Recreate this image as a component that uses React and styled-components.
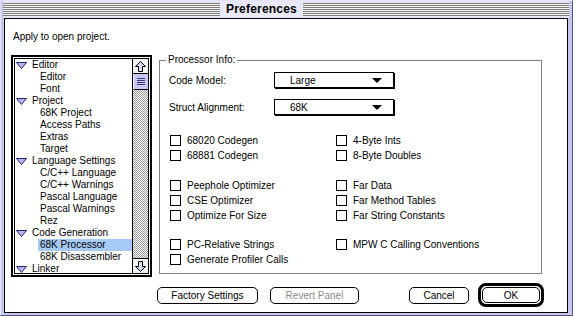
import React from 'react'
import styled, { createGlobalStyle } from 'styled-components'

const GlobalStyle = createGlobalStyle`
  html, body { margin: 0; padding: 0; background: #fff; }
  body {
    font-family: "Liberation Sans", Arial, sans-serif;
    font-size: 10px;
    color: #000;
  }
  * { box-sizing: border-box; }
`

const Window = styled.div`
  width: 573px;
  height: 316px;
  display: flex;
  flex-direction: column;
  background: #c6c6ee;
  border: 1px solid #55557a;
  border-top-color: #e4e4ff;
  border-left-color: #e4e4ff;
  padding: 0 4px 2px 3px;
`

const TitleBar = styled.div`
  height: 17px;
  display: flex;
  align-items: center;
  margin: 0 -1px;
  background: #e8e8f6;
`

const Stripes = styled.div`
  flex: ${p => (p.$w ? `0 0 ${p.$w}px` : '1')};
  height: 13px;
  background: repeating-linear-gradient(to bottom, #7c7c7c 0 1px, #f6f6f6 1px 2px);
`

const Title = styled.div`
  padding: 0 6px;
  font-weight: bold;
  font-size: 12px;
  line-height: 17px;
  letter-spacing: 0.2px;
`

const Content = styled.div`
  flex: 1;
  display: flex;
  flex-direction: column;
  background: #fff;
  border: 1px solid #000;
`

const Header = styled.div`
  margin: 12px 0 0 8px;
  line-height: 12px;
`

const Main = styled.div`
  display: flex;
  margin-top: 12px;
  padding-left: 6px;
`

const ListBox = styled.div`
  flex-shrink: 0;
  width: 141px;
  height: 222px;
  border: 2px solid #000;
  padding: 1px;
  background: #fff;
`

const ListInner = styled.div`
  height: 100%;
  display: flex;
  border: 1px solid #000;
`

const Items = styled.div`
  flex: 1;
  overflow: hidden;
`

const Row = styled.div`
  height: 12px;
  line-height: 12px;
  display: flex;
  align-items: center;
  white-space: nowrap;
  padding-left: ${p => (p.$child ? (p.$selected ? 2 : 25) : 1)}px;
  margin-left: ${p => (p.$selected ? 23 : 0)}px;
  background: ${p => (p.$selected ? '#a6caf6' : 'transparent')};
`

const Label = styled.span`
  margin-left: ${p => p.$gap || 0}px;
`

const Scrollbar = styled.div`
  width: 16px;
  display: flex;
  flex-direction: column;
  border-left: 1px solid #000;
`

const ArrowBtn = styled.div`
  height: 15px;
  display: flex;
  align-items: center;
  justify-content: center;
  background: #f2f2f2;
  border-${p => (p.$down ? 'top' : 'bottom')}: 1px solid #000;
`

const Thumb = styled.div`
  height: 16px;
  display: flex;
  align-items: center;
  justify-content: center;
  background: #c8c8f6;
  border-bottom: 1px solid #000;
  border-left: 1px solid #eeeeff;
`

const Grip = styled.div`
  width: 8px;
  height: 8px;
  background: repeating-linear-gradient(to bottom, #3a3a80 0 1px, transparent 1px 2px);
`

const Track = styled.div`
  flex: 1;
  background: repeating-conic-gradient(#9a9a9a 0 25%, #ffffff 0 50%) 0 0 / 2px 2px;
`

const RightCol = styled.div`
  width: 387px;
  margin-left: 5px;
  display: flex;
  flex-direction: column;
`

const Group = styled.div`
  position: relative;
  width: 383px;
  height: 214px;
  margin: 5px 0 0 2px;
  border: 1px solid #808080;
  padding: 11px 0 0 9px;
`

const Legend = styled.div`
  position: absolute;
  top: -7px;
  left: 6px;
  padding: 0 2px;
  line-height: 12px;
  background: #fff;
`

const PopupRow = styled.div`
  height: 17px;
  display: flex;
  align-items: center;
  margin-top: ${p => p.$gap || 0}px;
`

const PopupLabel = styled.div`
  width: 105px;
`

const Popup = styled.div`
  width: 120px;
  height: 16px;
  display: flex;
  align-items: center;
  padding: 0 11px 0 15px;
  border: 1px solid #000;
  box-shadow: 1px 1px 0 #000;
  margin-top: -1px;
`

const PopupValue = styled.span`
  flex: 1;
`

const CheckGrid = styled.div`
  display: grid;
  grid-template-columns: 166px 1fr;
  grid-auto-rows: 15px;
  margin-top: ${p => p.$gap}px;
  padding-left: 1px;
`

const Check = styled.div`
  display: flex;
  align-items: center;
  white-space: nowrap;
`

const Box = styled.span`
  width: 11px;
  height: 11px;
  border: 1px solid #000;
  margin-right: 6px;
  background: #fff;
`

const ButtonRow = styled.div`
  height: 24px;
  display: flex;
  align-items: center;
  margin-top: 9px;
`

const Button = styled.button`
  width: ${p => p.$w ? `${p.$w}px` : '100%'};
  height: ${p => p.$h || 17}px;
  margin-left: ${p => p.$ml || '0'};
  padding: 0;
  font: inherit;
  font-size: 10px;
  color: ${p => (p.$disabled ? '#8a8a8a' : '#000')};
  background: #fff;
  border: 1px solid #000;
  border-radius: 5px;
`

const DefaultRing = styled.div`
  width: 66px;
  height: 24px;
  margin-left: 9px;
  padding: 1px;
  border: 3px solid #000;
  border-radius: 8px;
`

const Disclosure = () => (
  <svg width="11" height="7" viewBox="0 0 11 7">
    <polygon points="0.5,0.5 10.5,0.5 5.5,6.5" fill="#b4b4f6" stroke="#22226a" strokeWidth="1" />
  </svg>
)

const ScrollArrow = ({ down }) => (
  <svg width="11" height="11" viewBox="0 0 11 11" style={down ? { transform: 'rotate(180deg)' } : undefined}>
    <polygon points="5.5,0.5 10.5,5.5 7.5,5.5 7.5,10.5 3.5,10.5 3.5,5.5 0.5,5.5" fill="#d8d8f4" stroke="#000" strokeWidth="1" />
  </svg>
)

const PopupArrow = () => (
  <svg width="10" height="5" viewBox="0 0 10 5">
    <polygon points="0,0 10,0 5,5" fill="#000" />
  </svg>
)

const tree = [
  { label: 'Editor' },
  { label: 'Editor', child: true },
  { label: 'Font', child: true },
  { label: 'Project' },
  { label: '68K Project', child: true },
  { label: 'Access Paths', child: true },
  { label: 'Extras', child: true },
  { label: 'Target', child: true },
  { label: 'Language Settings' },
  { label: 'C/C++ Language', child: true },
  { label: 'C/C++ Warnings', child: true },
  { label: 'Pascal Language', child: true },
  { label: 'Pascal Warnings', child: true },
  { label: 'Rez', child: true },
  { label: 'Code Generation' },
  { label: '68K Processor', child: true, selected: true },
  { label: '68K Disassembler', child: true },
  { label: 'Linker' },
]

const checkGroups = [
  { gap: 17, rows: [['68020 Codegen', '4-Byte Ints'], ['68881 Codegen', '8-Byte Doubles']] },
  {
    gap: 15,
    rows: [
      ['Peephole Optimizer', 'Far Data'],
      ['CSE Optimizer', 'Far Method Tables'],
      ['Optimize For Size', 'Far String Constants'],
    ],
  },
  { gap: 14, rows: [['PC-Relative Strings', 'MPW C Calling Conventions'], ['Generate Profiler Calls', null]] },
]

const App = () => {
  return (
    <>
      <GlobalStyle />
      <Window>
        <TitleBar>
          <Stripes $w={217} />
          <Title>Preferences</Title>
          <Stripes />
        </TitleBar>
        <Content>
          <Header>Apply to open project.</Header>
          <Main>
            <ListBox>
              <ListInner>
                <Items>
                  {tree.map((item, i) => (
                    <Row key={i} $child={item.child} $selected={item.selected}>
                      {!item.child && <Disclosure />}
                      <Label $gap={item.child ? 0 : 5}>{item.label}</Label>
                    </Row>
                  ))}
                </Items>
                <Scrollbar>
                  <ArrowBtn>
                    <ScrollArrow />
                  </ArrowBtn>
                  <Thumb>
                    <Grip />
                  </Thumb>
                  <Track />
                  <ArrowBtn $down>
                    <ScrollArrow down />
                  </ArrowBtn>
                </Scrollbar>
              </ListInner>
            </ListBox>
            <RightCol>
              <Group>
                <Legend>Processor Info:</Legend>
                <PopupRow>
                  <PopupLabel>Code Model:</PopupLabel>
                  <Popup>
                    <PopupValue>Large</PopupValue>
                    <PopupArrow />
                  </Popup>
                </PopupRow>
                <PopupRow $gap={10}>
                  <PopupLabel>Struct Alignment:</PopupLabel>
                  <Popup>
                    <PopupValue>68K</PopupValue>
                    <PopupArrow />
                  </Popup>
                </PopupRow>
                {checkGroups.map((g, gi) => (
                  <CheckGrid key={gi} $gap={g.gap}>
                    {g.rows.flat().map((label, i) =>
                      label ? (
                        <Check key={i}>
                          <Box />
                          {label}
                        </Check>
                      ) : (
                        <span key={i} />
                      )
                    )}
                  </CheckGrid>
                ))}
              </Group>
              <ButtonRow>
                <Button $w={101}>Factory Settings</Button>
                <Button $w={89} $ml="12px" $disabled>Revert Panel</Button>
                <Button $w={60} $ml="auto">Cancel</Button>
                <DefaultRing>
                  <Button $h={16}>OK</Button>
                </DefaultRing>
              </ButtonRow>
            </RightCol>
          </Main>
        </Content>
      </Window>
    </>
  )
}

export default App
